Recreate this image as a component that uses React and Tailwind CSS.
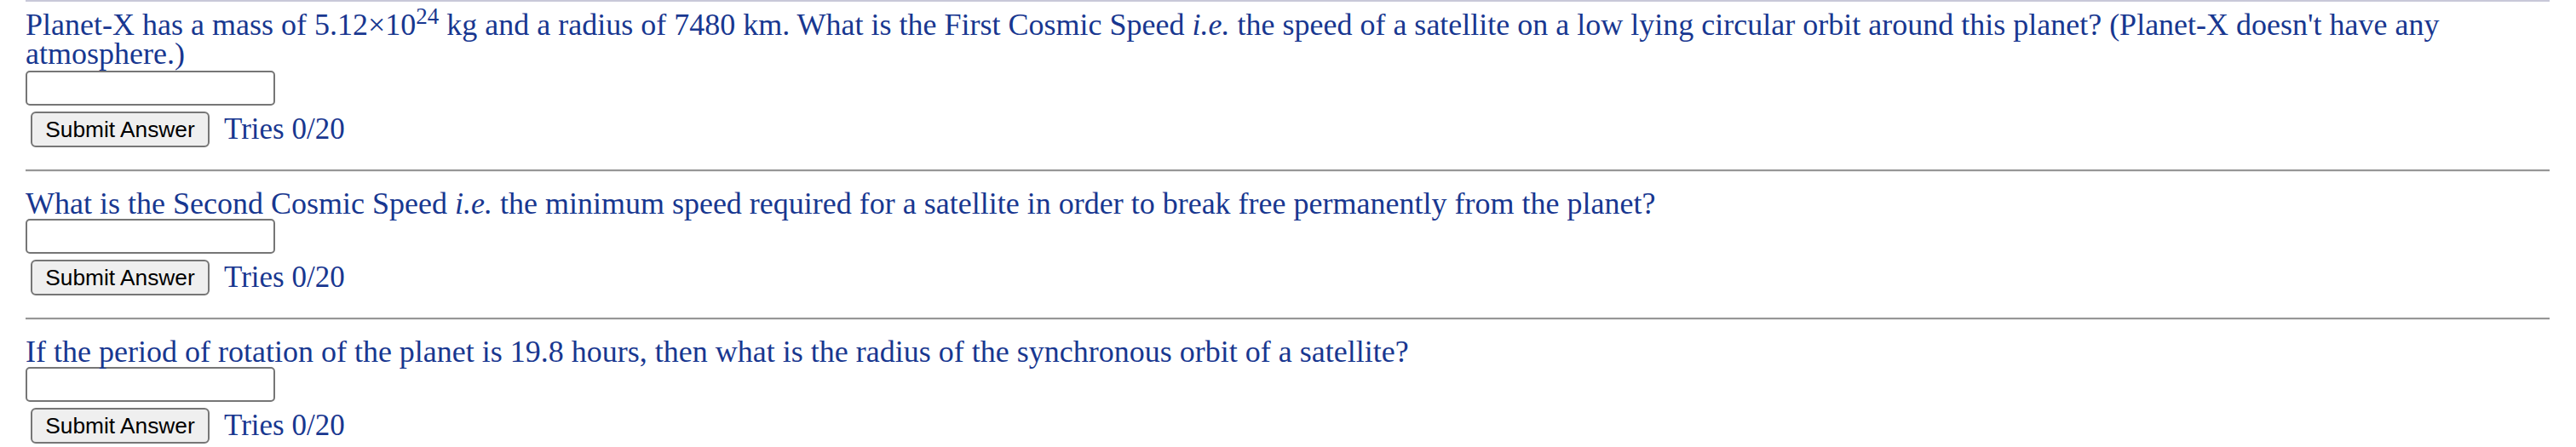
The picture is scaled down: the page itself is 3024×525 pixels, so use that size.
const questions = [
  {
    id: 1,
    text: (
      <>
        Planet-X has a mass of 5.12×10<sup>24</sup> kg and a radius of 7480 km. What is the First Cosmic Speed <i>i.e.</i> the
        speed of a satellite on a low lying circular orbit around this planet? (Planet-X doesn't have any atmosphere.)
      </>
    ),
  },
  {
    id: 2,
    text: (
      <>
        What is the Second Cosmic Speed <i>i.e.</i> the minimum speed required for a satellite in order to break free
        permanently from the planet?
      </>
    ),
  },
  {
    id: 3,
    text: <>If the period of rotation of the planet is 19.8 hours, then what is the radius of the synchronous orbit of a satellite?</>,
  },
];

function Question({ q, first, last }) {
  return (
    <div className={first ? "pt-[10px]" : "pt-[20px]"}>
      <div className="w-[2880px] text-[36px] leading-[34px] text-[#183790]">{q.text}</div>
      <input
        type="text"
        className={`block w-[293px] h-[41px] bg-white border-2 border-[#767676] rounded-[5px] ${first ? "mt-[3px]" : "mt-[1px]"}`}
      />
      <div className="flex items-center mt-[7px]">
        <button className="ml-[6px] w-[210px] h-[42px] bg-[#efefef] border-2 border-[#767676] rounded-[6px] text-black text-[26.3px] leading-none font-['Liberation_Sans',Arial,sans-serif]">
          Submit Answer
        </button>
        <span className="ml-[17px] text-[35px] leading-[34px] text-[#183790]">Tries 0/20</span>
      </div>
      {!last && <div className="mt-[26px] h-[3px] bg-[#969696] border-b border-[#ececec]" />}
    </div>
  );
}

export default function App() {
  return (
    <div className="w-[3024px] h-[525px] overflow-hidden bg-white font-['Liberation_Serif','Times_New_Roman',serif]">
      <div className="ml-[30px] w-[2963px]">
        <div className="h-[2px] bg-[#c8c8d8]" />
        {questions.map((q, i) => (
          <Question key={q.id} q={q} first={i === 0} last={i === questions.length - 1} />
        ))}
      </div>
    </div>
  );
}
